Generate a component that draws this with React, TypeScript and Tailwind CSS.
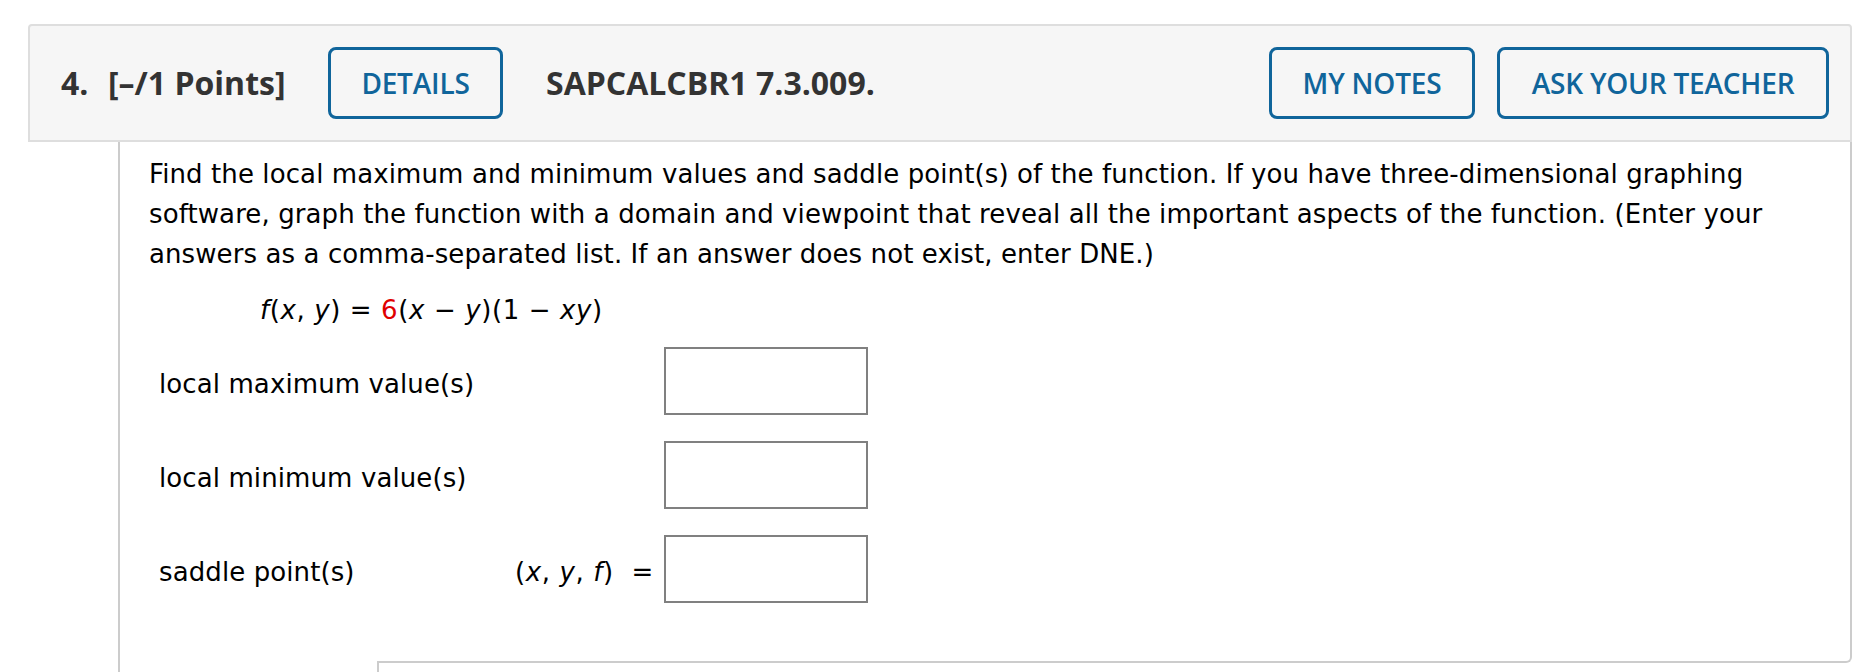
import React from "react";

const bodyFont = { fontFamily: '"DejaVu Sans", Verdana, sans-serif' };

function HeaderButton({ label, width }: { label: string; width: string }) {
  return (
    <button
      className={`${width} h-[72px] flex items-center justify-center border-[3px] border-[#10659b] rounded-[8px] text-[#10659b] text-[28px] font-semibold tracking-[-0.2px] bg-transparent`}
    >
      {label}
    </button>
  );
}

function AnswerRow({ label, prefix }: { label: string; prefix?: React.ReactNode }) {
  return (
    <div className="flex items-center h-[68px]">
      <div className="w-[356px] pt-[6px] text-[26px] tracking-[0.1px] text-black whitespace-nowrap">{label}</div>
      <div className="w-[133px] pt-[6px] text-right text-[26px] tracking-[0.6px] text-black whitespace-nowrap">{prefix}</div>
      <input
        type="text"
        className="ml-[16px] w-[204px] h-[68px] border-2 border-[#808080] bg-white outline-none"
      />
    </div>
  );
}

export default function App() {
  return (
    <div className="min-h-screen bg-white pt-[24px] pl-[28px]">
      <div className="w-[1824px]">
        {/* Question header */}
        <div
          className="h-[118px] bg-[#f6f6f6] border-2 border-[#dedede] rounded-t-[4px] flex items-center pl-[31px] pr-[21px] text-[#333333]"
          style={{ fontFamily: '"Open Sans", sans-serif' }}
        >
          <span className="w-[47px] text-[32px] font-bold">4.</span>
          <span className="w-[220px] text-[32px] font-bold">[–/1 Points]</span>
          <HeaderButton label="DETAILS" width="w-[175px]" />
          <span className="ml-[43px] text-[32px] font-bold">SAPCALCBR1 7.3.009.</span>
          <div className="ml-auto flex items-center gap-[22px]">
            <HeaderButton label="MY NOTES" width="w-[206px]" />
            <HeaderButton label="ASK YOUR TEACHER" width="w-[332px]" />
          </div>
        </div>

        {/* Question body */}
        <div className="ml-[90px] border-l-2 border-[#cccccc]" style={bodyFont}>
          <div className="border-r-2 border-[#cccccc] pl-[29px] pt-[12px] pb-[50px]">
            <p className="text-[26px] leading-[40px] tracking-[0.1px] text-black whitespace-nowrap">
              Find the local maximum and minimum values and saddle point(s) of the function. If you have three-dimensional graphing
              <br />
              software, graph the function with a domain and viewpoint that reveal all the important aspects of the function. (Enter your
              <br />
              answers as a comma-separated list. If an answer does not exist, enter DNE.)
            </p>
            <div className="mt-[16px] pl-[111px] text-[26px] leading-[40px] tracking-[0.6px] text-black whitespace-nowrap">
              <i>f</i>(<i>x</i>, <i>y</i>) = <span className="text-[#e00000]">6</span>(<i>x</i> − <i>y</i>)(1 − <i>xy</i>)
            </div>
            <div className="mt-[17px] pl-[10px] flex flex-col gap-[26px]">
              <AnswerRow label="local maximum value(s)" />
              <AnswerRow label="local minimum value(s)" />
              <AnswerRow
                label="saddle point(s)"
                prefix={
                  <>
                    (<i>x</i>, <i>y</i>, <i>f</i>)&nbsp;&nbsp;=
                  </>
                }
              />
            </div>
          </div>
          <div className="flex">
            <div className="w-[257px] shrink-0" />
            <div className="flex-1 h-[10px] border-b-2 border-r-2 border-[#cccccc] rounded-br-[6px]" />
          </div>
          <div className="ml-[257px] h-[12px] border-l-2 border-[#cccccc]" />
        </div>
      </div>
    </div>
  );
}
